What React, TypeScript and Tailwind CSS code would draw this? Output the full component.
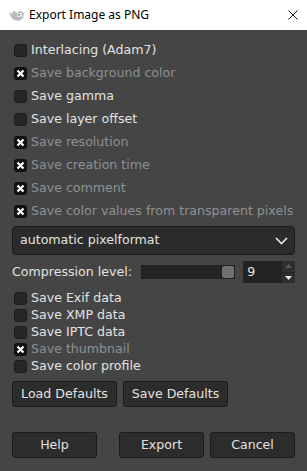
import React from "react";

const font = { fontFamily: '"DejaVu Sans", sans-serif' };

const Check = ({ checked, label, dim }: { checked?: boolean; label: string; dim?: boolean }) => (
  <div className="flex items-center gap-[4px]">
    <div
      className={
        "shrink-0 w-[13px] h-[13px] rounded-[3px] flex items-center justify-center " +
        (checked ? "bg-[#111111]" : "bg-[#272727] border border-[#1c1c1c]")
      }
    >
      {checked && (
        <svg width="9" height="9" viewBox="0 0 9 9">
          <path d="M1.5 1.5 L7.5 7.5 M7.5 1.5 L1.5 7.5" stroke="#ffffff" strokeWidth="2.2" />
        </svg>
      )}
    </div>
    <span
      className={
        "whitespace-nowrap text-[12.6px] leading-none " + (dim ? "text-[#8e9194]" : "text-[#e2e2e2]")
      }
    >
      {label}
    </span>
  </div>
);

const Btn = ({ label, w }: { label: string; w: string }) => (
  <div
    className={
      "h-[26px] rounded-[3px] bg-[#2c2c2c] border border-[#1b1b1b] flex items-center justify-center text-[12.6px] text-[#e2e2e2] " +
      w
    }
  >
    {label}
  </div>
);

export default function App() {
  return (
    <div className="w-[307px] h-[471px] flex flex-col bg-[#454545] overflow-hidden" style={font}>
      {/* title bar */}
      <div className="h-[30px] bg-white flex items-center px-[8px]">
        <svg width="17" height="14" viewBox="0 0 17 14">
          <path d="M1 4 L4 6 L6 2 L8 5 L12 3 L16 5 L15 10 L11 13 L6 12 L3 9 Z" fill="#b9b9b9" />
          <rect x="9" y="5" width="5" height="4" fill="#e4e4e4" />
          <rect x="10" y="6" width="1.5" height="1.5" fill="#777" />
        </svg>
        <span className="ml-[4px] text-[12px] text-black" style={{ fontFamily: '"Noto Sans", sans-serif' }}>
          Export Image as PNG
        </span>
        <svg className="ml-auto mr-[1px]" width="10" height="10" viewBox="0 0 10 10">
          <path d="M0.5 0.5 L9.5 9.5 M9.5 0.5 L0.5 9.5" stroke="#111" strokeWidth="1" />
        </svg>
      </div>

      <div className="flex-1 flex flex-col px-[12px] pt-[9px]">
        <div className="flex flex-col [&>*]:h-[23px] [&>*]:pl-[2px]">
          <Check label="Interlacing (Adam7)" />
          <Check checked dim label="Save background color" />
          <Check label="Save gamma" />
          <Check label="Save layer offset" />
          <Check checked dim label="Save resolution" />
          <Check checked dim label="Save creation time" />
          <Check checked dim label="Save comment" />
          <Check checked dim label="Save color values from transparent pixels" />
        </div>

        <div className="mt-[3px] h-[29px] rounded-[4px] bg-[#2b2b2b] border border-[#1b1b1b] flex items-center pl-[7px] pr-[6px]">
          <span className="text-[12.6px] text-[#e2e2e2]">automatic pixelformat</span>
          <svg className="ml-auto" width="13" height="8" viewBox="0 0 13 8">
            <path d="M1 1 L6.5 6.5 L12 1" stroke="#e8e8e8" strokeWidth="1.6" fill="none" />
          </svg>
        </div>

        <div className="mt-[6px] h-[22px] flex items-center">
          <span className="whitespace-nowrap text-[12.6px] text-[#e2e2e2] w-[129px]">Compression level:</span>
          <div className="w-[95px] h-[14px] bg-[#232323] flex items-center justify-end pr-[1px]">
            <div className="w-[12px] h-[12px] rounded-[2px] bg-[#707070]" />
          </div>
          <div className="ml-[8px] w-[52px] h-[22px] bg-[#232323] flex">
            <span className="flex-1 pl-[4px] text-[12.6px] text-[#e2e2e2] leading-[22px]">9</span>
            <div className="w-[13px] flex flex-col gap-[1px]">
              <div className="flex-1 bg-[#2e2e2e] flex items-center justify-center">
                <svg width="7" height="4" viewBox="0 0 7 4">
                  <path d="M0 4 L3.5 0 L7 4 Z" fill="#5a5a5a" />
                </svg>
              </div>
              <div className="flex-1 bg-[#2e2e2e] flex items-center justify-center">
                <svg width="7" height="4" viewBox="0 0 7 4">
                  <path d="M0 0 L3.5 4 L7 0 Z" fill="#e6e6e6" />
                </svg>
              </div>
            </div>
          </div>
        </div>

        <div className="mt-[7px] flex flex-col [&>*]:h-[17px] [&>*]:pl-[2px]">
          <Check label="Save Exif data" />
          <Check label="Save XMP data" />
          <Check label="Save IPTC data" />
          <Check checked dim label="Save thumbnail" />
          <Check label="Save color profile" />
        </div>

        <div className="mt-[6px] flex gap-[6px]">
          <Btn label="Load Defaults" w="w-[105px]" />
          <Btn label="Save Defaults" w="w-[105px]" />
        </div>

        <div className="mt-[25px] flex">
          <Btn label="Help" w="w-[85px]" />
          <div className="ml-auto flex gap-[6px]">
            <Btn label="Export" w="w-[85px]" />
            <Btn label="Cancel" w="w-[85px]" />
          </div>
        </div>
      </div>
    </div>
  );
}
